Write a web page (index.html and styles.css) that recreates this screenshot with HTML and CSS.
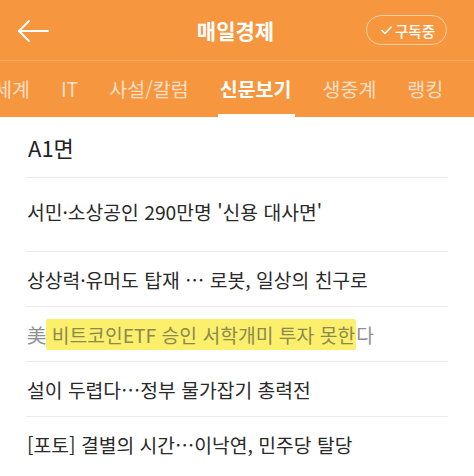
FILE: index.html
```html
<!DOCTYPE html>
<html lang="ko">
<head>
  <meta charset="UTF-8" />
  <meta name="viewport" content="width=device-width, initial-scale=1.0"/>
  <title>매일경제 - 신문보기</title>
  <link rel="stylesheet" href="styles.css">
</head>
<body>
  <!-- Orange header: title bar + section tabs -->
  <header class="masthead">
    <div class="titlebar">
      <a class="back" href="#" aria-label="뒤로">
        <svg width="32" height="24" viewBox="0 0 32 24" fill="none" stroke="#fff" stroke-width="2" stroke-linecap="round" stroke-linejoin="round">
          <path d="M2 12H31"/>
          <path d="M12 2L2 12L12 22"/>
        </svg>
      </a>
      <h1 class="title">매일경제</h1>
      <button class="subscribe">
        <svg width="11" height="9" viewBox="0 0 11 9" fill="none" stroke="#fff" stroke-width="1.6" stroke-linecap="round" stroke-linejoin="round">
          <path d="M1 4.5L4 7.5L10 1.2"/>
        </svg>
        <span>구독중</span>
      </button>
    </div>
    <!-- tab strip is scrolled a little, so the first tab sits half off screen -->
    <nav class="tabs">
      <a href="#">세계</a>
      <a href="#">IT</a>
      <a href="#">사설/칼럼</a>
      <a href="#" class="active">신문보기</a>
      <a href="#">생중계</a>
      <a href="#">랭킹</a>
    </nav>
  </header>

  <main class="paper">
    <h2 class="page-name">A1면</h2>
    <ul class="headlines">
      <li>서민·소상공인 290만명 '신용 대사면'</li>
      <li>상상력·유머도 탑재 … 로봇, 일상의 친구로</li>
      <li class="read">美<mark> 비트코인ETF 승인 서학개미 투자 못한</mark>다</li>
      <li>설이 두렵다…정부 물가잡기 총력전</li>
      <li>[포토] 결별의 시간…이낙연, 민주당 탈당</li>
    </ul>
  </main>
</body>
</html>
```

FILE: styles.css
```css
body {
  margin: 0;
  font-family: "Noto Sans CJK KR", "Noto Sans", sans-serif;
  color: #222;
  background-color: #ffffff;
  overflow: hidden;
}

.masthead {
  background-color: #f6963e;
  color: #fff;
}

.titlebar {
  height: 60px;
  display: flex;
  align-items: center;
  justify-content: space-between;
  padding: 0 27px 0 17px;
  border-bottom: 1px solid #f8a860;
}

.back {
  display: flex;
  width: 32px;
  height: 24px;
  margin-top: 2px;
}

.title {
  margin: 0 0 0 56px;
  font-size: 21px;
  font-weight: 700;
  line-height: 1;
}

.subscribe {
  display: flex;
  align-items: center;
  gap: 3px;
  height: 30px;
  padding: 0 11px 0 14px;
  border: 1.5px solid rgba(255, 255, 255, 0.55);
  border-radius: 15px;
  background: transparent;
  color: #fff;
  font-family: inherit;
  font-size: 14.5px;
  font-weight: 500;
}

.tabs {
  height: 56px;
  display: flex;
  align-items: center;
  gap: 31px;
  margin-left: -6px;
  white-space: nowrap;
}

.tabs a {
  position: relative;
  font-size: 19.5px;
  line-height: 56px;
  color: rgba(255, 255, 255, 0.72);
  text-decoration: none;
}

.tabs a.active {
  color: #fff;
  font-weight: 700;
}

.tabs a.active::after {
  content: "";
  position: absolute;
  left: -2px;
  right: -3px;
  bottom: 0;
  height: 3px;
  background: #fff;
}

.paper {
  padding: 0 26px;
}

.page-name {
  margin: 0;
  padding: 17px 0 17px 2px;
  font-size: 22px;
  font-weight: 400;
  line-height: 26px;
  color: #222;
  border-bottom: 1px solid #ebebeb;
}

.headlines {
  list-style: none;
  margin: 0;
  padding: 0;
}

.headlines li {
  padding: 15px 0 13px 1px;
  font-size: 19.3px;
  line-height: 26px;
  color: #2a2a2a;
  border-bottom: 1px solid #ebebeb;
  white-space: nowrap;
}

.headlines li:first-child {
  padding: 21px 0 26px 1px;
}

.headlines li:last-child {
  border-bottom: none;
}

.headlines li.read {
  color: #8f8f8f;
}

/* marker-pen highlight on a read headline */
.headlines mark {
  background: #fbef6c;
  color: #8c8950;
  padding: 2px 1px 1px 0;
  border-radius: 2px;
}
```
